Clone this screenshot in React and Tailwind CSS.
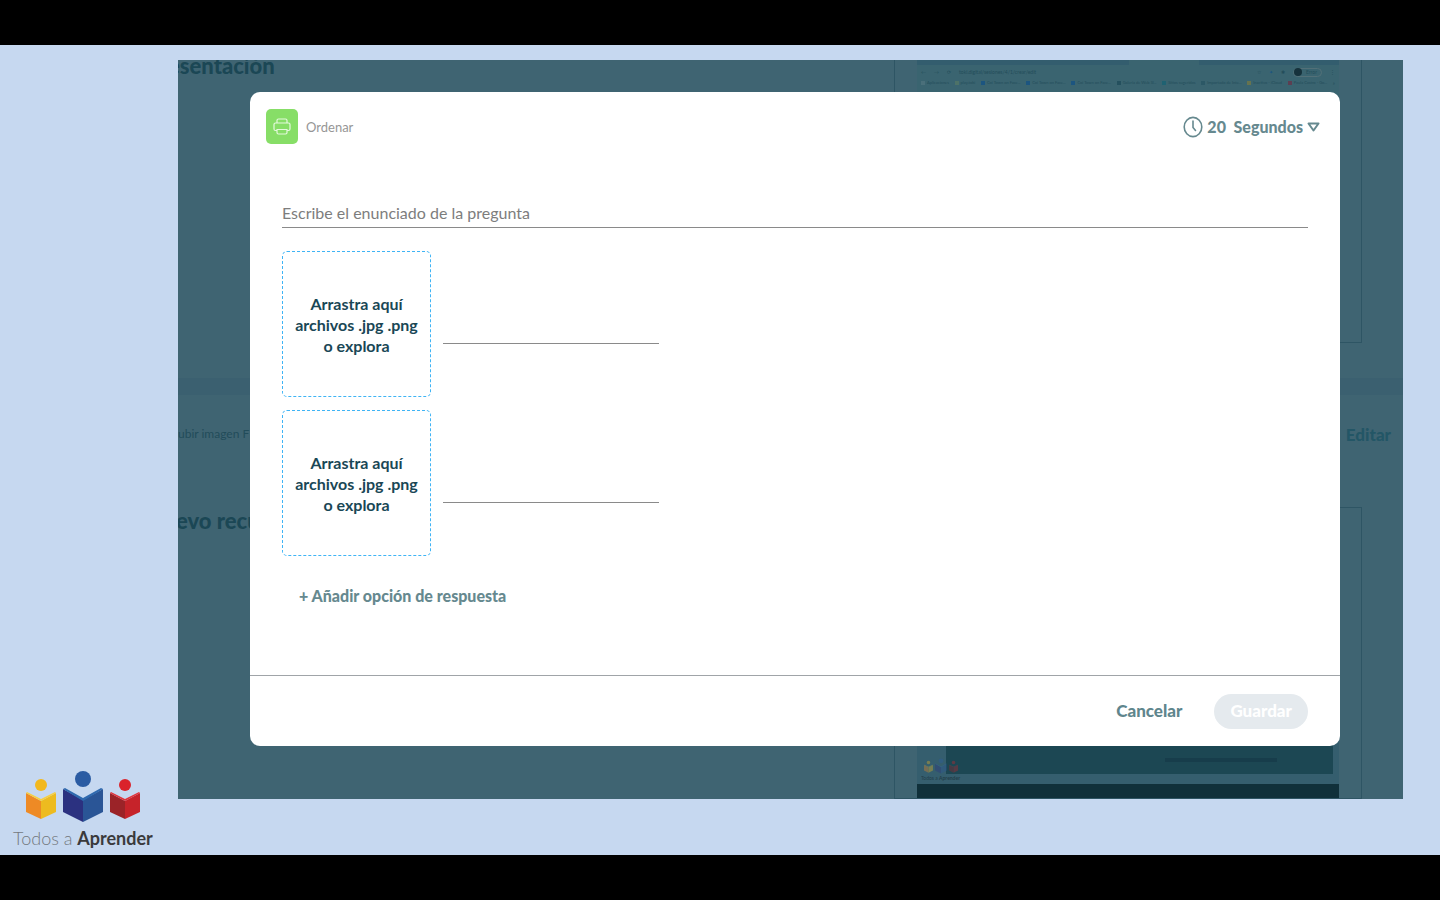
import { useState } from "react";

const BOOKMARKS = [
  { label: "Aplicaciones", color: "bg-[#4a6f7a]" },
  { label: "play.toki", color: "bg-[#4d7268]" },
  { label: "Coi Town on Face...", color: "bg-[#1c5580]" },
  { label: "Coi Town on Face...", color: "bg-[#1c5580]" },
  { label: "Coi Town on Face...", color: "bg-[#1c5580]" },
  { label: "Galería de Web Sl...", color: "bg-[#24505e]" },
  { label: "Sitios sugeridos", color: "bg-[#1f6272]" },
  { label: "Importado de Inte...", color: "bg-[#2c5866]" },
  { label: "Inactivo - iCloud", color: "bg-[#66734f]" },
  { label: "Paula Castro - Go...", color: "bg-[#5c3f52]" },
];

function BookReaders({ className }) {
  return (
    <svg viewBox="0 0 114 51" className={className} aria-hidden="true">
      <circle cx="15" cy="14" r="6" fill="#f2b81d" />
      <path d="M0 22 L15 30 L15 48 L0 41 Z" fill="#ee8a25" />
      <path d="M30 22 L15 30 L15 48 L30 41 Z" fill="#edbb1f" />
      <path d="M0 22 L1 21 L15 28 L29 21 L30 22 L15 30 Z" fill="#f7cf3e" />
      <circle cx="57" cy="8" r="8" fill="#2b5ca3" />
      <path d="M37 18 L57 29 L57 51 L37 41 Z" fill="#2b3180" />
      <path d="M77 18 L57 29 L57 51 L77 41 Z" fill="#2a5596" />
      <path d="M37 18 L39 17 L57 27 L75 17 L77 18 L57 30 Z" fill="#2f69ae" />
      <circle cx="99" cy="14" r="6" fill="#da232b" />
      <path d="M84 22 L99 30 L99 48 L84 41 Z" fill="#9b2328" />
      <path d="M114 22 L99 30 L99 48 L114 41 Z" fill="#c6232a" />
      <path d="M84 22 L85 21 L99 28 L113 21 L114 22 L99 30 Z" fill="#e0333a" />
    </svg>
  );
}

function Logo() {
  return (
    <div className="flex flex-col items-center">
      <BookReaders className="w-[114px] h-[51px]" />
      <p className="text-lg leading-8 font-light whitespace-nowrap text-[#74787e]">
        Todos a <span className="font-bold text-[#3a3a3c]">Aprender</span>
      </p>
    </div>
  );
}

function PrinterIcon() {
  return (
    <svg viewBox="0 0 18 18" className="w-[18px] h-[18px]" fill="none" stroke="#e4f9dc" strokeWidth="1.2" strokeLinejoin="round" aria-hidden="true">
      <path d="M4 5 V2.500 Q4 1 5.500 1 H12.500 Q14 1 14 2.500 V5" />
      <path d="M4 12.500 H2.500 Q1 12.500 1 11 V6.500 Q1 5 2.500 5 H15.500 Q17 5 17 6.500 V11 Q17 12.500 15.500 12.500 H14" />
      <path d="M3.500 11.500 H14.500 M4 11.500 V14.500 Q4 16 5.500 16 H12.500 Q14 16 14 14.500 V11.500" />
    </svg>
  );
}

function ClockIcon() {
  return (
    <svg viewBox="0 0 20 22" className="w-5 h-[22px]" fill="none" stroke="#66898f" strokeWidth="1.6" aria-hidden="true">
      <ellipse cx="10" cy="11" rx="8.800" ry="9.600" />
      <path d="M10 5 V11.500 L12.500 14.500" strokeLinecap="round" />
    </svg>
  );
}

function BrowserShot() {
  return (
    <div className="text-[5px] leading-[6px] text-[#234d5a] bg-[#3a6470] h-full">
      <div className="h-[5px] bg-[#335d6e] flex">
        <span className="ml-[212px] w-[70px] bg-[#3a6470]" />
      </div>
      <div className="h-[14px] px-1 flex items-center gap-2">
        <span>←</span>
        <span>→</span>
        <span>⟳</span>
        <span>toki.digital/sesiones/4/1/crear/edit</span>
        <span className="ml-auto">☆</span>
        <span className="text-[#1c5580]">✦</span>
        <span>✱</span>
        <span className="h-[9px] pr-1 rounded-full border border-[#527078] flex items-center gap-1">
          <span className="size-2 rounded-full bg-[#16323c]" />
          Error
        </span>
        <span>⋮</span>
      </div>
      <div className="h-2 px-1 flex items-center justify-between">
        {BOOKMARKS.map((b, i) => (
          <span key={i} className="flex items-center gap-[2px] whitespace-nowrap text-[4px]">
            <span className={`size-1 ${b.color}`} />
            {b.label}
          </span>
        ))}
        <span>»</span>
      </div>
    </div>
  );
}

function SessionShot() {
  return (
    <div className="h-full flex flex-col bg-[#355e6e]">
      <div className="flex-1 relative flex pl-[29px] pr-[6px] pb-[10px]">
        <div className="flex-1 bg-[#1c4753] flex items-end justify-end pb-3 pr-14">
          <div className="w-28 h-1 bg-[#173d4b]" />
        </div>
        <div className="absolute left-[4px] bottom-[1px] flex flex-col items-center opacity-35">
          <BookReaders className="w-[34px] h-4" />
          <p className="text-[5px] leading-[9px] whitespace-nowrap text-black">
            Todos a <b>Aprender</b>
          </p>
        </div>
      </div>
      <div className="h-[14px] bg-[#10303a]" />
    </div>
  );
}

function Backdrop() {
  return (
    <div className="absolute inset-0 overflow-hidden flex flex-col text-[#1b4755]" aria-hidden="true">
      <div className="h-[318px] shrink-0 flex justify-between pr-[41px]">
        <h2 className="-ml-[10px] -mt-[10px] text-[22px] leading-8 font-black">esentación</h2>
        <div className="w-[468px] h-[283px] px-[22px] border border-t-0 border-[#2e5564]">
          <BrowserShot />
        </div>
      </div>
      <div className="h-[17px] shrink-0 bg-[#3b6070]" />
      <div className="h-[112px] shrink-0 pt-[29px] pr-3 flex items-start justify-between">
        <p className="text-xs leading-5 text-[#224c5a]">ubir imagen F</p>
        <p className="text-[17px] leading-[22px] font-black text-[#235666]">Editar</p>
      </div>
      <div className="flex-1 flex justify-between pr-[41px]">
        <h2 className="-ml-[2px] -mt-[2px] text-[22px] leading-8 font-black">evo recu</h2>
        <div className="w-[468px] px-[22px] border border-[#2e5564]">
          <SessionShot />
        </div>
      </div>
    </div>
  );
}

function AnswerOption({ index }) {
  return (
    <li className="flex items-center gap-3">
      <label className="w-[149px] h-[146px] rounded-[5px] border border-dashed border-[#3fb4f5] flex items-center justify-center text-center text-base leading-[21px] font-bold text-[#1a4756] cursor-pointer">
        <span className="w-[130px]">Arrastra aquí archivos .jpg .png o explora</span>
        <input type="file" accept=".jpg,.png" className="sr-only" />
      </label>
      <input
        type="text"
        aria-label={`Opción de respuesta ${index}`}
        className="w-[216px] h-7 mt-3 border-b border-[#8a8a8a] outline-none"
      />
    </li>
  );
}

function QuestionModal() {
  const [options, setOptions] = useState([1, 2]);

  return (
    <form role="dialog" aria-label="Ordenar" className="relative flex-1 flex flex-col bg-white rounded-[10px]">
      <header className="pt-[17px] pl-4 pr-5 flex items-center justify-between">
        <div className="flex items-center gap-2">
          <span className="w-8 h-[35px] rounded-[5px] bg-[#87de67] flex items-center justify-center">
            <PrinterIcon />
          </span>
          <h1 className="text-[13px] leading-5 text-[#969696]">Ordenar</h1>
        </div>
        <label className="flex items-center gap-1 text-[#66898f]">
          <ClockIcon />
          <select aria-label="Tiempo" className="appearance-none field-sizing-content bg-transparent text-base leading-[22px] font-black outline-none">
            <option>20{"\u00a0"} Segundos</option>
          </select>
          <svg viewBox="0 0 13 10" className="w-[13px] h-[10px]" fill="none" stroke="currentColor" strokeWidth="2" strokeLinejoin="round" aria-hidden="true">
            <path d="M1.500 1.500 H11.500 L6.500 8.500 Z" />
          </svg>
        </label>
      </header>

      <div className="flex-1 px-8 pt-[54px]">
        <input
          type="text"
          aria-label="Enunciado de la pregunta"
          placeholder="Escribe el enunciado de la pregunta"
          className="w-full h-[30px] border-b border-[#8a8a8a] text-base placeholder:text-[#7d7d7d] outline-none"
        />
        <ul className="mt-[23px] flex flex-col gap-[13px]">
          {options.map((n) => (
            <AnswerOption key={n} index={n} />
          ))}
        </ul>
        <button
          type="button"
          onClick={() => setOptions([...options, options.length + 1])}
          className="mt-7 ml-[17px] text-base leading-6 font-black text-[#66898f]"
        >
          + Añadir opción de respuesta
        </button>
      </div>

      <footer className="h-[71px] px-8 border-t border-[#a0a4a8] flex items-center justify-end gap-8 text-[17px] font-black">
        <button type="button" className="text-[#5f868d]">Cancelar</button>
        <button type="submit" disabled className="h-[35px] px-4 rounded-full bg-[#e5eaee] text-white">
          Guardar
        </button>
      </footer>
    </form>
  );
}

export default function App() {
  return (
    <div className="min-h-screen flex flex-col bg-[#c6d8f0] font-[Lato,sans-serif]">
      <div className="h-[45px] bg-black" />
      <main className="flex-1 flex">
        <aside className="w-[178px] shrink-0 flex items-end pl-[13px] pb-px">
          <Logo />
        </aside>
        <section className="relative flex-1 flex mt-[15px] mr-[37px] mb-14 pt-8 pr-[63px] pb-[53px] pl-[72px] bg-[#3f6472]">
          <Backdrop />
          <QuestionModal />
        </section>
      </main>
      <div className="h-[45px] bg-black" />
    </div>
  );
}
